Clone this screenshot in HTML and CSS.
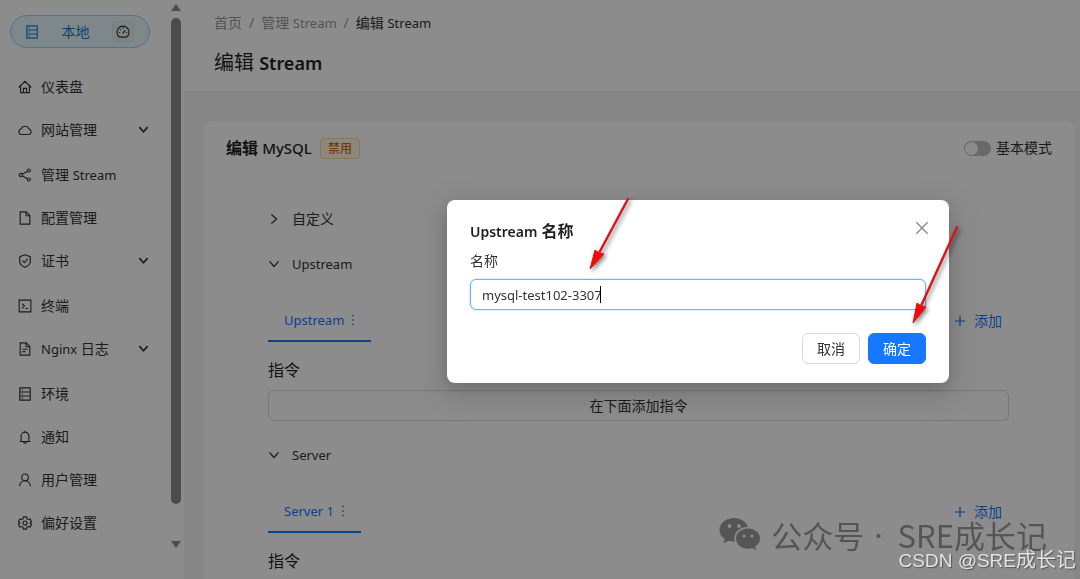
FILE: index.html
```html
<!DOCTYPE html>
<html lang="zh-CN">
<head>
  <meta charset="UTF-8">
  <meta name="viewport" content="width=device-width, initial-scale=1.0">
  <title>编辑 Stream</title>
  <link rel="stylesheet" href="styles.css">
</head>
<body>
  <!-- icon set -->
  <svg class="sprite" aria-hidden="true">
    <symbol id="i-server" viewBox="0 0 16 16"><path d="M2 1h12v14H2zM2 5.700h12M2 10.300h12M4.300 3.400h1.400M4.300 8h1.400M4.300 12.700h1.400"/></symbol>
    <symbol id="i-dash" viewBox="0 0 16 16"><path d="M4 13.800a6.900 6.900 0 1 1 8 0zM7.600 9.600l3-3.400M8 2.800v1.400M3.200 8.600h1.300M11.600 8.600h1.300M4.400 4.900l.9.900"/></symbol>
    <symbol id="i-home" viewBox="0 0 16 16"><path d="M.8 8.600 8 1.400l7.200 7.200M2.900 7v7.400h10.200V7M6.200 14.400V9.600h3.600v4.800"/></symbol>
    <symbol id="i-cloud" viewBox="0 0 16 16"><path d="M3.900 13.200a3.200 3.200 0 0 1-.4-6.300 4.800 4.800 0 0 1 9 0 3.200 3.200 0 0 1-.4 6.300z"/></symbol>
    <symbol id="i-share" viewBox="0 0 16 16"><path d="m4.800 7.200 6-3.500M4.800 8.800l6 3.500"/><circle cx="3.200" cy="8" r="1.800"/><circle cx="12.400" cy="2.900" r="1.700"/><circle cx="12.400" cy="13.100" r="1.700"/></symbol>
    <symbol id="i-file" viewBox="0 0 16 16"><path d="M2.500 1h7l4 4v10h-11zM9.200 1.200v4.200h4.200"/></symbol>
    <symbol id="i-safe" viewBox="0 0 16 16"><path d="M8 .9 14 3v6c0 2.600-3 4.700-6 6.200C5 13.700 2 11.600 2 9V3zM5.200 7.500l2.200 2.300L11 5.600"/></symbol>
    <symbol id="i-code" viewBox="0 0 16 16"><path d="M1.300 1.300h13.400v13.400H1.300zM4.500 5.300l2.800 2.700-2.800 2.700M8.300 10.800h3.200"/></symbol>
    <symbol id="i-log" viewBox="0 0 16 16"><path d="M2.500 1h7l4 4v10h-11zM9.200 1.200v4.200h4.200M5 8.300h6M5 11h3.500"/></symbol>
    <symbol id="i-bell" viewBox="0 0 16 16"><path d="M1.800 13.100h12.400M3.500 13V7a4.500 4.500 0 0 1 9 0v6M8 2.500V.9M6.300 13.300a1.700 1.700 0 0 0 3.400 0"/></symbol>
    <symbol id="i-user" viewBox="0 0 16 16"><circle cx="8" cy="5" r="3.800"/><path d="M1.800 15c.3-3.600 2.900-6.200 6.200-6.200s5.900 2.600 6.200 6.200"/></symbol>
    <symbol id="i-gear" viewBox="0 0 16 16"><path d="m6.300 1h3.400l.6 2.200 1.300.8 2.200-.6 1.700 2.900L13.900 8l1.600 1.700-1.700 2.900-2.200-.6-1.300.8-.6 2.200H6.300l-.6-2.200-1.300-.8-2.200.6L.5 9.700 2.100 8 .5 6.300l1.700-2.900 2.200.6 1.300-.8z"/><circle cx="8" cy="8" r="2.300"/></symbol>
    <symbol id="i-down" viewBox="0 0 16 16"><path d="m2 4.500 6 6.800 6-6.800"/></symbol>
    <symbol id="i-right" viewBox="0 0 16 16"><path d="m4.500 2 7 6-7 6"/></symbol>
    <symbol id="i-plus" viewBox="0 0 16 16"><path d="M8 1v14M1 8h14"/></symbol>
    <symbol id="i-close" viewBox="0 0 16 16"><path d="m1.500 1.500 13 13M14.500 1.500l-13 13"/></symbol>
    <symbol id="i-more" viewBox="0 0 16 16"><path d="M7 1h2v2H7zM7 7h2v2H7zM7 13h2v2H7z"/></symbol>
  </svg>

  <div class="layout">
    <aside class="sidebar">
      <div class="side-body">
        <div class="env">
          <svg class="icon"><use href="#i-server"/></svg>
          <span class="env-name">本地</span>
          <button class="env-btn" aria-label="dashboard"><svg class="icon"><use href="#i-dash"/></svg></button>
        </div>
        <nav class="menu">
          <a href="#" class="item"><svg class="icon"><use href="#i-home"/></svg><span>仪表盘</span></a>
          <a href="#" class="item sub"><svg class="icon"><use href="#i-cloud"/></svg><span>网站管理</span><svg class="arrow"><use href="#i-down"/></svg></a>
          <a href="#" class="item"><svg class="icon"><use href="#i-share"/></svg><span>管理 <span class="en">Stream</span></span></a>
          <a href="#" class="item"><svg class="icon"><use href="#i-file"/></svg><span>配置管理</span></a>
          <a href="#" class="item sub"><svg class="icon"><use href="#i-safe"/></svg><span>证书</span><svg class="arrow"><use href="#i-down"/></svg></a>
          <a href="#" class="item"><svg class="icon"><use href="#i-code"/></svg><span>终端</span></a>
          <a href="#" class="item sub"><svg class="icon"><use href="#i-log"/></svg><span><span class="en">Nginx</span> 日志</span><svg class="arrow"><use href="#i-down"/></svg></a>
          <a href="#" class="item"><svg class="icon"><use href="#i-server"/></svg><span>环境</span></a>
          <a href="#" class="item"><svg class="icon"><use href="#i-bell"/></svg><span>通知</span></a>
          <a href="#" class="item"><svg class="icon"><use href="#i-user"/></svg><span>用户管理</span></a>
          <a href="#" class="item"><svg class="icon"><use href="#i-gear"/></svg><span>偏好设置</span></a>
        </nav>
      </div>
      <div class="scrollbar">
        <div class="tri up"></div>
        <div class="thumb"></div>
        <div class="tri down"></div>
      </div>
    </aside>

    <main class="main">
      <header class="page-header">
        <nav class="breadcrumb">
          <a href="#">首页</a><span>/</span><a href="#">管理 <span class="en">Stream</span></a><span>/</span><span class="current">编辑 <span class="en">Stream</span></span>
        </nav>
        <h1>编辑 <span class="en">Stream</span></h1>
      </header>

      <section class="card">
        <div class="card-head">
          <h2>编辑 <span class="en">MySQL</span></h2>
          <span class="tag">禁用</span>
          <label class="mode"><input type="checkbox" class="switch">基本模式</label>
        </div>
        <div class="card-body">
          <button class="panel"><svg class="icon"><use href="#i-right"/></svg>自定义</button>
          <button class="panel"><svg class="icon"><use href="#i-down"/></svg><span class="en">Upstream</span></button>
          <div class="tabs">
            <button class="tab"><span class="en">Upstream</span><svg class="more"><use href="#i-more"/></svg></button>
            <button class="add"><svg class="icon"><use href="#i-plus"/></svg>添加</button>
          </div>
          <h3>指令</h3>
          <button class="btn block">在下面添加指令</button>
          <button class="panel server"><svg class="icon"><use href="#i-down"/></svg><span class="en">Server</span></button>
          <div class="tabs">
            <button class="tab"><span class="en">Server 1</span><svg class="more"><use href="#i-more"/></svg></button>
            <button class="add"><svg class="icon"><use href="#i-plus"/></svg>添加</button>
          </div>
          <h3>指令</h3>
        </div>
      </section>
    </main>
  </div>

  <div class="mask"></div>

  <div class="modal" role="dialog" aria-labelledby="modal-title">
    <div class="modal-head">
      <h2 id="modal-title"><span class="en">Upstream</span> 名称</h2>
      <button class="close" aria-label="close"><svg class="icon"><use href="#i-close"/></svg></button>
    </div>
    <label for="name">名称</label>
    <div class="field">
      <input type="text" id="name" value="mysql-test102-3307">
      <span class="caret"></span>
    </div>
    <div class="modal-foot">
      <button class="btn">取消</button>
      <button class="btn primary">确定</button>
    </div>
  </div>

  <!-- red pointers -->
  <svg class="pointers" width="1080" height="579" aria-hidden="true">
    <path class="line" d="M628 199 599 253M957 227 921 306"/>
    <path class="head" d="m590 269 5-19 4 3 5 1zM913 323l4-20 4 3 5 1z"/>
  </svg>

  <div class="watermark">
    <svg viewBox="0 0 42 36" width="42" height="36" aria-hidden="true">
      <path class="bubble" d="M15 1C7 1 .5 6.300.5 13c0 3.800 2 7 5.200 9.200L4.500 26.500l5.200-2.700c1.700.5 3.500.8 5.300.8h1c-.4-1.200-.6-2.300-.6-3.500C15.400 14.800 21 10 28.700 10 27.400 4.800 21.700 1 15 1z"/>
      <path class="bubble" d="M29 11.500c-6.700 0-12 4.400-12 10s5.300 10.200 12 10.200c1.400 0 2.800-.2 4.100-.6l4.200 2.400-1.200-3.800c3-2 4.900-4.900 4.900-8.200 0-5.600-5.300-10-12-10z"/>
      <circle class="eye" cx="10.500" cy="9" r="1.900"/><circle class="eye" cx="20" cy="9" r="1.900"/>
      <circle class="eye" cx="25" cy="19" r="1.600"/><circle class="eye" cx="33" cy="19" r="1.600"/>
    </svg>
    <span>公众号</span><span class="dot">·</span><span>SRE成长记</span>
  </div>
  <div class="csdn"><span class="latin">CSDN @SRE</span>成长记</div>
</body>
</html>
```
FILE: styles.css
```css
* { box-sizing: border-box; }
body { font-family: "Noto Sans", "Noto Sans CJK SC", sans-serif; font-size: 14px; line-height: 22px; color: #333; background: #f5f5f5; margin: 0; height: 100vh; overflow: hidden; }
h1, h2, h3 { margin: 0; color: #1f1f1f; }
a { color: inherit; text-decoration: none; }
button { font: inherit; color: inherit; background: none; border: none; padding: 0; cursor: pointer; }
.en { font-size: 13px; }
.sprite { display: none; }
.icon { width: 14px; height: 14px; flex: none; fill: none; stroke: currentColor; stroke-width: 1.3; }

.layout { display: flex; height: 100vh; overflow: hidden; }

/* sidebar */
.sidebar { width: 184px; flex: none; display: flex; background: #fff; }
.side-body { flex: 1; padding: 15px 0 0 10px; }
.env { display: flex; align-items: center; justify-content: space-between; width: 140px; height: 33px; padding: 0 15px 0 14px; border: 1px solid #91d5ff; border-radius: 17px; background: #e6f7fb; color: #1677e0; }
.env-btn { display: flex; align-items: center; justify-content: center; width: 22px; height: 21px; border: 1px solid #d9e9ec; border-radius: 4px; background: #e2f0f3; color: #333; }
.menu { padding-top: 17px; }
.item { display: flex; align-items: center; gap: 9px; height: 43px; padding: 0 22px 0 8px; }
.item.sub { margin-bottom: 2px; }
.item .arrow { width: 11px; height: 11px; margin-left: auto; fill: none; stroke: currentColor; stroke-width: 2.4; }
.scrollbar { width: 13px; padding: 4px 3px 0 0; display: flex; flex-direction: column; }
.tri { border: 5px solid transparent; border-top-width: 0; border-bottom-width: 0; }
.tri.up { border-bottom: 7px solid #8a8a8a; }
.tri.down { border-top: 7px solid #8a8a8a; }
.thumb { height: 84vh; margin: 7px 0 37px; border-radius: 5px; background: #8a8a8a; }

/* header */
.main { flex: 1; min-width: 0; }
.page-header { height: 92px; padding: 12px 30px; background: #fff; border-bottom: 1px solid #e8e8e8; }
.breadcrumb { display: flex; gap: 7px; color: #999; }
.breadcrumb .current { color: #333; }
h1 { margin-top: 14px; font-size: 20px; line-height: 30px; font-weight: 400; }
h1 .en { font-size: 18px; font-weight: 600; }

/* card */
.card { margin: 29px 6px 0 20px; padding: 0 22px; height: 600px; background: #fff; border-radius: 8px; }
.card-head { display: flex; align-items: center; height: 54px; }
.card-head h2 { font-size: 16px; font-weight: 700; }
.card-head h2 .en { font-size: 15px; font-weight: 500; }
.tag { margin-left: 8px; padding: 0 7px; font-size: 12px; line-height: 19px; font-weight: 500; color: #d46b08; background: #fff7e6; border: 1px solid #ffd591; border-radius: 4px; }
.mode { display: flex; align-items: center; gap: 5px; margin-left: auto; }
.switch { appearance: none; display: flex; width: 27px; height: 15px; margin: 0; padding: 1px; border-radius: 8px; background: #bfbfbf; }
.switch::before { content: ""; width: 13px; height: 13px; border-radius: 50%; background: #fff; }
.card-body { padding: 21px 43px 0 42px; }
.panel { display: flex; align-items: center; gap: 12px; width: 100%; height: 45px; padding-left: 0; }
.panel .icon { width: 12px; height: 12px; stroke-width: 1.7; }
.tabs { display: flex; justify-content: space-between; height: 42px; margin-top: 14px; color: #1677ff; }
.tab { display: flex; align-items: center; gap: 3px; padding: 0 12px 0 16px; border-bottom: 2px solid #1677ff; }
.more { width: 12px; height: 12px; fill: currentColor; }
.add { display: flex; align-items: center; gap: 8px; padding-right: 7px; }
.add .icon { width: 12px; height: 12px; stroke-width: 1.6; }
h3 { margin: 17px 0 9px; font-size: 16px; line-height: 22px; font-weight: 400; }
.btn { height: 31px; padding: 0 14px; border: 1px solid #d9d9d9; border-radius: 6px; background: #fff; }
.block { width: 100%; }
.panel.server { margin-top: 11px; }

/* modal */
.mask { position: fixed; inset: 0; background: rgba(0, 0, 0, 0.45); }
.modal { position: absolute; top: 200px; left: 447px; width: 502px; padding: 20px 23px 19px; background: #fff; border-radius: 8px; box-shadow: 0 6px 16px rgba(0, 0, 0, 0.12), 0 9px 28px 8px rgba(0, 0, 0, 0.1); }
.modal-head { display: flex; align-items: center; justify-content: space-between; margin-bottom: 7px; }
.modal-head h2 { font-size: 16px; font-weight: 700; }
.modal-head h2 .en { font-size: 14px; font-weight: 600; }
.close { display: flex; margin: 0 -3px 8px 0; color: #8c8c8c; }
.close .icon { stroke-width: 1.6; }
.modal label { display: block; margin-bottom: 7px; }
.field { position: relative; }
.field input { display: block; width: 100%; height: 31px; padding: 0 11px; font: inherit; font-size: 13px; color: #333; border: 1px solid #69b1ff; border-radius: 6px; outline: none; box-shadow: 0 0 0 1px #e0f1ff; }
.caret { position: absolute; left: 130px; top: 7px; width: 1px; height: 17px; background: #000; }
.modal-foot { display: flex; justify-content: flex-end; gap: 8px; margin-top: 23px; }
.primary { color: #fff; background: #1677ff; border-color: #1677ff; }

/* drawn on top */
.pointers { position: absolute; top: 0; left: 0; filter: drop-shadow(2px 2px 2px rgba(0, 0, 0, 0.5)); }
.pointers .line { fill: none; stroke: #d9141b; stroke-width: 2.4; stroke-linecap: round; }
.pointers .head { fill: #fb0505; stroke: #d9141b; stroke-linejoin: round; }
.watermark { position: absolute; right: 33px; bottom: 21px; display: flex; align-items: center; gap: 10px; font-family: "Noto Sans CJK SC", sans-serif; font-size: 31px; line-height: 46px; color: #555; }
.watermark .dot { padding-right: 5px; font-family: "Noto Sans", sans-serif; }
.bubble { fill: #555; }
.eye { fill: #8c8c8c; }
.csdn { position: absolute; right: 4px; bottom: 4px; font-family: "Liberation Sans", "Noto Sans CJK SC", sans-serif; font-size: 20px; line-height: 28px; color: #e3e3e3; text-shadow: 1px 1px 1px #555; }
.latin { font-size: 19px; }
```
